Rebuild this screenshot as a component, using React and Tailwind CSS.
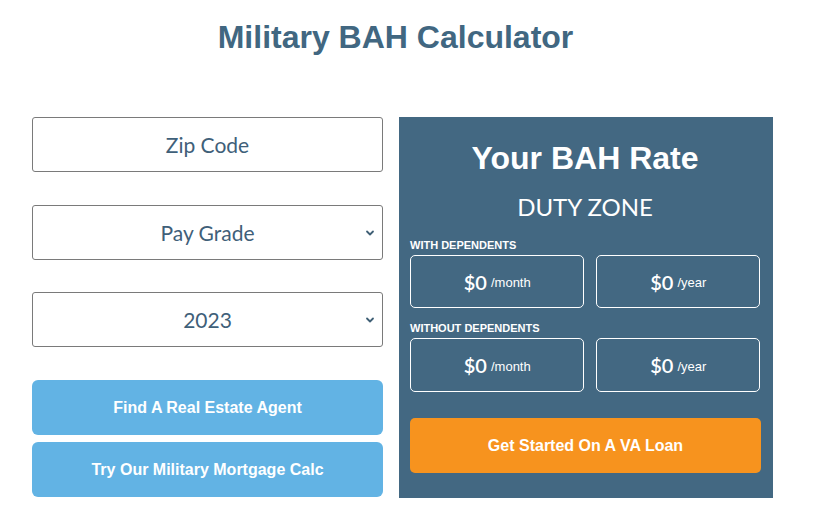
function Chevron() {
  return (
    <svg width="10" height="10" viewBox="0 0 10 10" className="absolute right-[7px] top-1/2 -translate-y-1/2 pointer-events-none">
      <path d="M2 3.5 L5 6.5 L8 3.5" fill="none" stroke="#3f5f75" strokeWidth="1.8" strokeLinecap="round" strokeLinejoin="round" />
    </svg>
  )
}

function Field({ label, select }) {
  return (
    <div className="relative h-[55px] border border-[#7a7a7a] rounded-[3px] flex items-center justify-center bg-white">
      <span className="text-[21px] text-[#3f6079]" style={{ fontFamily: 'Lato, "Open Sans", sans-serif' }}>{label}</span>
      {select && <Chevron />}
    </div>
  )
}

function RateBox({ width, unit }) {
  return (
    <div className={`${width} h-full border border-white rounded-[5px] flex items-center justify-center text-white`}>
      <span className="text-[20px] font-semibold" style={{ fontFamily: 'Lato, sans-serif' }}>$0</span>
      <span className="text-[13px] ml-[4px] mt-[3px]" style={{ fontFamily: '"Liberation Sans", Arial, sans-serif' }}>{unit}</span>
    </div>
  )
}

export default function App() {
  const sans = { fontFamily: '"Liberation Sans", Arial, sans-serif' }
  return (
    <div className="w-[815px] h-[520px] bg-white">
      <div className="w-[741px] ml-[32px]">
        <h1 className="pt-[19px] pr-[14px] text-center text-[32px] leading-[36px] font-bold text-[#416781]" style={sans}>
          Military BAH Calculator
        </h1>
        <div className="mt-[62px] flex gap-[16px]">
          {/* inputs column */}
          <div className="w-[351px] flex flex-col">
            <Field label="Zip Code" />
            <div className="mt-[33px]"><Field label="Pay Grade" select /></div>
            <div className="mt-[32px]"><Field label="2023" select /></div>
            <button className="mt-[33px] h-[55px] rounded-[6px] bg-[#62b3e4] text-white font-bold text-[16px]" style={sans}>
              Find A Real Estate Agent
            </button>
            <button className="mt-[7px] h-[55px] rounded-[6px] bg-[#62b3e4] text-white font-bold text-[16px]" style={sans}>
              Try Our Military Mortgage Calc
            </button>
          </div>

          {/* results panel */}
          <div className="w-[374px] bg-[#436882] pl-[11px] pr-[13px] pt-[23px] pb-[25px] text-white">
            <h2 className="text-center text-[32px] leading-[36px] font-bold" style={sans}>Your BAH Rate</h2>
            <div className="mt-[16px] text-center text-[24px] leading-[30px]" style={{ fontFamily: 'Lato, sans-serif' }}>DUTY ZONE</div>
            <div className="mt-[16px] text-[11px] leading-[14px] font-bold" style={sans}>WITH DEPENDENTS</div>
            <div className="mt-[3px] h-[53px] flex gap-[12px]">
              <RateBox width="w-[175px]" unit="/month" />
              <RateBox width="w-[164px]" unit="/year" />
            </div>
            <div className="mt-[13px] text-[11px] leading-[14px] font-bold" style={sans}>WITHOUT DEPENDENTS</div>
            <div className="mt-[3px] h-[54px] flex gap-[12px]">
              <RateBox width="w-[175px]" unit="/month" />
              <RateBox width="w-[164px]" unit="/year" />
            </div>
            <button className="mt-[26px] w-[351px] h-[55px] rounded-[5px] bg-[#f7931e] text-white font-bold text-[16px]" style={sans}>
              Get Started On A VA Loan
            </button>
          </div>
        </div>
      </div>
    </div>
  )
}
